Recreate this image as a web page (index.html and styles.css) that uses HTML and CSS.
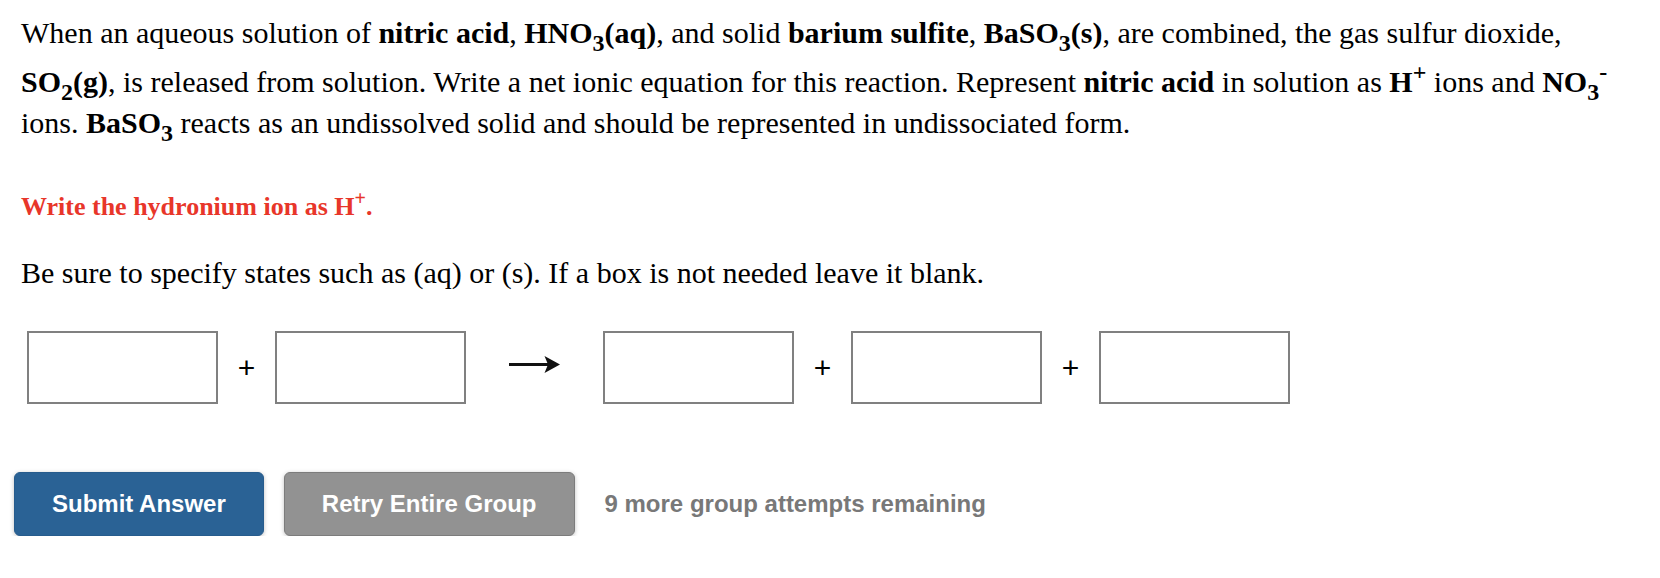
FILE: index.html
```html
<!DOCTYPE html>
<html lang="en">
<head>
<meta charset="utf-8">
<title>Net ionic equation</title>
<link rel="stylesheet" href="styles.css">
</head>
<body>
<div class="question">
  <p class="intro">When an aqueous solution of <b>nitric acid</b>, <b>HNO<sub>3</sub>(aq)</b>, and solid <b>barium sulfite</b>, <b>BaSO<sub>3</sub>(s)</b>, are combined, the gas sulfur dioxide, <b>SO<sub>2</sub>(g)</b>, is released from solution. Write a net ionic equation for this reaction. Represent <b>nitric acid</b> in solution as <b>H<sup>+</sup></b> ions and <b>NO<sub>3</sub><sup>-</sup></b> ions. <b>BaSO<sub>3</sub></b> reacts as an undissolved solid and should be represented in undissociated form.</p>
  <p class="warn">Write the hydronium ion as H<sup>+</sup>.</p>
  <p class="hint">Be sure to specify states such as (aq) or (s). If a box is not needed leave it blank.</p>
  <div class="equation">
    <input class="box" type="text" aria-label="reactant 1">
    <span class="op">+</span>
    <input class="box" type="text" aria-label="reactant 2">
    <span class="arrow">
      <svg width="51" height="19" viewBox="0 0 51 19" aria-hidden="true">
        <rect x="0" y="8" width="44" height="3" fill="#111"/>
        <polygon points="35.5,1 51,9.5 35.5,18 39,9.5" fill="#111"/>
      </svg>
    </span>
    <input class="box" type="text" aria-label="product 1">
    <span class="op">+</span>
    <input class="box" type="text" aria-label="product 2">
    <span class="op">+</span>
    <input class="box" type="text" aria-label="product 3">
  </div>
  <div class="actions">
    <button class="btn btn-submit" type="button">Submit Answer</button>
    <button class="btn btn-retry" type="button">Retry Entire Group</button>
    <span class="attempts">9 more group attempts remaining</span>
  </div>
</div>
</body>
</html>
```
FILE: styles.css
```css
body {
  margin: 0;
  background: #fff;
  color: #000;
  font-family: "Liberation Serif", "Times New Roman", serif;
  font-size: 30px;
}

.question {
  padding: 12px 40px 0 14px;
}

.intro,
.warn,
.hint {
  margin: 0;
  padding-left: 7px;
  line-height: 39px;
}

.intro {
  line-height: 41px;
}

sub {
  font-size: 24px;
  vertical-align: -8px;
  line-height: 0;
}

sup {
  font-size: 24px;
  vertical-align: 12px;
  line-height: 39px;
}

.warn {
  margin-top: 36px;
  color: #e8362a;
  font-weight: bold;
  font-size: 26px;
}

.warn sup {
  font-size: 20px;
  vertical-align: 10px;
  line-height: 39px;
}

.hint {
  margin-top: 27px;
}

.equation {
  display: flex;
  align-items: center;
  margin-top: 39px;
  padding-left: 13px;
}

.box {
  width: 191px;
  height: 73px;
  margin: 0;
  padding: 0;
  border: 2px solid #808080;
  box-sizing: border-box;
  background: #fff;
  border-radius: 0;
  outline: none;
}

.op {
  width: 57px;
  text-align: center;
  font-family: "Liberation Sans", Arial, sans-serif;
  font-size: 30px;
  line-height: 1;
}

.arrow {
  width: 137px;
  display: flex;
  justify-content: center;
  margin-top: -6px;
}

.arrow svg {
  display: block;
}

.actions {
  display: flex;
  align-items: center;
  margin-top: 68px;
}

.btn {
  height: 64px;
  margin: 0 20px 0 0;
  padding: 0 37px;
  border-radius: 6px;
  font-family: "Liberation Sans", Arial, sans-serif;
  font-size: 24px;
  font-weight: bold;
  color: #fff;
  box-shadow: 0 1px 4px rgba(0, 0, 0, 0.25);
}

.btn-submit {
  background: #2a6295;
  border: 1px solid #275c8d;
}

.btn-retry {
  background: #929292;
  border: 1px solid #7c7c7c;
  margin-right: 30px;
}

.attempts {
  font-family: "Liberation Sans", Arial, sans-serif;
  font-size: 24px;
  font-weight: bold;
  color: #787878;
}
```
